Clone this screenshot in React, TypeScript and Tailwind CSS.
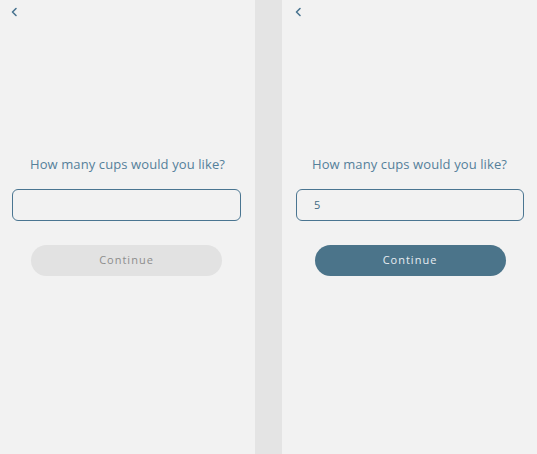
import React from "react";

function ChevronLeft() {
  return (
    <svg width="8" height="10" viewBox="0 0 8 10" fill="none">
      <path d="M6 1.5L2.5 5L6 8.5" stroke="#4a7591" strokeWidth="1.6" strokeLinecap="round" strokeLinejoin="round" />
    </svg>
  );
}

function CupsPanel({ value }: { value: string }) {
  const filled = value.length > 0;
  return (
    <div className="w-[255px] h-[454px] bg-[#f2f2f2] flex flex-col">
      {/* back */}
      <div className={filled ? "pl-[12px] pt-[7px] h-[156px]" : "pl-[10px] pt-[7px] h-[156px]"}>
        <ChevronLeft />
      </div>

      <p className="text-[13px] leading-4 text-[#55809a] text-center tracking-[0.1px]">
        How many cups would you like?
      </p>

      <div className={filled ? "pl-[14px] pr-[13px] mt-[17px]" : "pl-3 pr-[14px] mt-[17px]"}>
        <div className="h-[32px] rounded-md border-[1.5px] border-[#4a7591] flex items-center px-[17px] text-[11px] text-[#3f6a82]">
          {value}
        </div>
      </div>

      <div className={filled ? "flex justify-center mt-6 pl-[9px] pr-[8px]" : "flex justify-center mt-6 pr-[2px]"}>
        <button
          className={
            filled
              ? "w-[191px] h-[31px] rounded-full bg-[#4b748a] text-[#e8eef2] text-[11px] tracking-[1px]"
              : "w-[191px] h-[31px] rounded-full bg-[#e2e2e2] text-[#8d8d8d] text-[11px] tracking-[1px]"
          }
        >
          Continue
        </button>
      </div>
    </div>
  );
}

export default function App() {
  return (
    <div className="w-[537px] h-[454px] bg-[#e4e4e4] flex justify-between font-['Open_Sans','Lato',sans-serif]">
      <CupsPanel value="" />
      <CupsPanel value="5" />
    </div>
  );
}
